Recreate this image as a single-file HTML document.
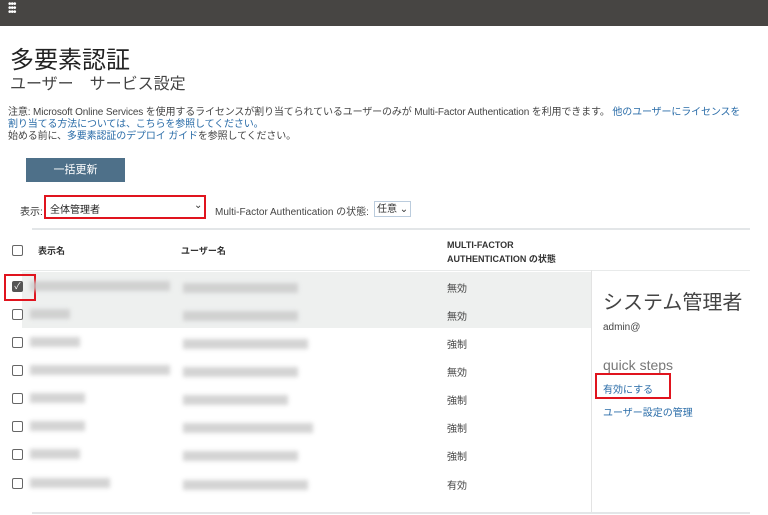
<!DOCTYPE html><html><head><meta charset="utf-8"><style>
body{margin:0;width:768px;height:515px;overflow:hidden;background:#fff;font-family:"Liberation Sans","Noto Sans CJK JP",sans-serif;color:#333;position:relative}
.a{position:absolute;white-space:nowrap}
.lnk{color:#2a6ca8}
.cb{position:absolute;width:9px;height:9px;border:1px solid #666;border-radius:2px;background:#fff}
.bl{position:absolute;height:10px;background:#c9c9c9;filter:blur(2px);opacity:.8}
.st{position:absolute;left:447px;font-size:10px;color:#444}
</style></head><body>
<div class="a" style="left:0;top:0;width:768px;height:26px;background:#474543"></div>
<div class="a" style="left:8px;top:3px;color:#fff;font-size:10px;letter-spacing:-1px;line-height:4px">•••<br>•••<br>•••</div>
<div class="a" style="left:10px;top:40px;font-size:24px;color:#222">多要素認証</div>
<div class="a" style="left:10px;top:70px;font-size:16px;color:#444">ユーザー　サービス設定</div>
<div class="a" style="left:8px;top:107px;font-size:10px;line-height:12px;color:#444;letter-spacing:-0.13px">注意: Microsoft Online Services を使用するライセンスが割り当てられているユーザーのみが Multi-Factor Authentication を利用できます。 <span class="lnk">他のユーザーにライセンスを<br>割り当てる方法については、こちらを参照してください。</span><br>始める前に、<span class="lnk">多要素認証のデプロイ ガイド</span>を参照してください。</div>
<div class="a" style="left:26px;top:158px;width:99px;height:24px;background:#4e7089;color:#fff;font-size:11px;text-align:center;line-height:24px">一括更新</div>
<div class="a" style="left:20px;top:203px;font-size:10px">表示:</div>
<div class="a" style="left:44px;top:195px;width:158px;height:20px;border:2px solid #e0141e"></div>
<div class="a" style="left:50px;top:201px;font-size:10px;color:#222">全体管理者</div>
<div class="a" style="left:194px;top:200px;font-size:10px">⌄</div>
<div class="a" style="left:215px;top:203px;font-size:10px;color:#444">Multi-Factor Authentication の状態:</div>
<div class="a" style="left:374px;top:201px;width:37px;height:16px;border:1px solid #bcd;font-size:10px;line-height:16px;padding-left:2px;box-sizing:border-box">任意 ⌄</div>
<div class="a" style="left:32px;top:228px;width:718px;height:2px;background:#e3e6e8"></div>
<div class="cb" style="left:12px;top:245px"></div>
<div class="a" style="left:38px;top:244px;font-size:9px;font-weight:bold">表示名</div>
<div class="a" style="left:181px;top:244px;font-size:9px;font-weight:bold">ユーザー名</div>
<div class="a" style="left:447px;top:238px;font-size:9px;font-weight:bold;line-height:14px">MULTI-FACTOR<br>AUTHENTICATION の状態</div>
<div class="a" style="left:20px;top:270px;width:730px;height:1px;background:#e8eaea"></div>
<div class="a" style="left:22px;top:272px;width:569px;height:56px;background:#eef0ef"></div>
<div class="a" style="left:591px;top:270px;width:1px;height:242px;background:#e3e3e3"></div>
<div class="a" style="left:4px;top:274px;width:28px;height:23px;border:2px solid #e0141e"></div>
<div class="a" style="left:12px;top:281px;width:11px;height:11px;background:#555;border-radius:2px;color:#fff;font-size:9px;line-height:11px;text-align:center">✓</div>
<div class="cb" style="left:12px;top:309px"></div><div class="cb" style="left:12px;top:337px"></div><div class="cb" style="left:12px;top:365px"></div><div class="cb" style="left:12px;top:393px"></div><div class="cb" style="left:12px;top:421px"></div><div class="cb" style="left:12px;top:449px"></div><div class="cb" style="left:12px;top:478px"></div>
<div class="bl" style="left:30px;top:281px;width:140px"></div><div class="bl" style="left:183px;top:283px;width:115px"></div>
<div class="bl" style="left:30px;top:309px;width:40px"></div><div class="bl" style="left:183px;top:311px;width:115px"></div>
<div class="bl" style="left:30px;top:337px;width:50px"></div><div class="bl" style="left:183px;top:339px;width:125px"></div>
<div class="bl" style="left:30px;top:365px;width:140px"></div><div class="bl" style="left:183px;top:367px;width:115px"></div>
<div class="bl" style="left:30px;top:393px;width:55px"></div><div class="bl" style="left:183px;top:395px;width:105px"></div>
<div class="bl" style="left:30px;top:421px;width:55px"></div><div class="bl" style="left:183px;top:423px;width:130px"></div>
<div class="bl" style="left:30px;top:449px;width:50px"></div><div class="bl" style="left:183px;top:451px;width:115px"></div>
<div class="bl" style="left:30px;top:478px;width:80px"></div><div class="bl" style="left:183px;top:480px;width:125px"></div>
<div class="st" style="top:280px">無効</div><div class="st" style="top:308px">無効</div><div class="st" style="top:336px">強制</div><div class="st" style="top:364px">無効</div><div class="st" style="top:392px">強制</div><div class="st" style="top:420px">強制</div><div class="st" style="top:448px">強制</div><div class="st" style="top:477px">有効</div>
<div class="a" style="left:603px;top:286px;font-size:20px;color:#444">システム管理者</div>
<div class="a" style="left:603px;top:322px;font-size:10px;color:#444">admin@</div>
<div class="a" style="left:603px;top:357px;font-size:14px;color:#777">quick steps</div>
<div class="a" style="left:595px;top:373px;width:72px;height:22px;border:2px solid #e0141e"></div>
<div class="a lnk" style="left:603px;top:381px;font-size:10px">有効にする</div>
<div class="a lnk" style="left:603px;top:404px;font-size:10px">ユーザー設定の管理</div>
<div class="a" style="left:32px;top:512px;width:718px;height:2px;background:#e3e6e8"></div>
</body></html>
